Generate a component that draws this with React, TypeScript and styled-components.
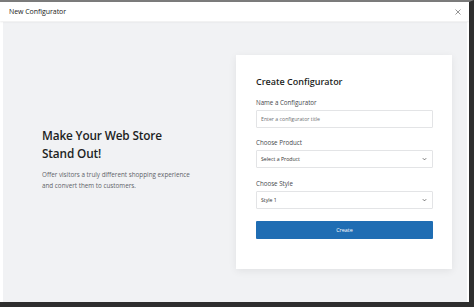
import React from "react";
import styled, { createGlobalStyle } from "styled-components";

const Global = createGlobalStyle`
  html, body { margin: 0; padding: 0; }
  body { width: 474px; height: 307px; overflow: hidden; font-family: "Open Sans", "Noto Sans", sans-serif; }
  * { box-sizing: border-box; }
`;

const Frame = styled.div`
  width: 474px;
  height: 307px;
  background: #ffffff;
  border-top: 2px solid #7b7b7b;
  border-right: 5px solid #2e2e2e;
  border-bottom: 5px solid #2e2e2e;
  display: flex;
  flex-direction: column;
`;

const Header = styled.div`
  height: 19px;
  flex: none;
  display: flex;
  align-items: center;
  justify-content: space-between;
  padding: 0 8px 0 9px;
  background: #fff;
  box-shadow: 0 1px 2px rgba(0, 0, 0, 0.08);
  position: relative;
  z-index: 1;
`;

const HeaderTitle = styled.div`
  font-size: 7px;
  font-weight: 500;
  color: #1a1a1a;
  letter-spacing: -0.05px;
`;

const Close = styled.button`
  border: none;
  background: none;
  padding: 0;
  width: 7px;
  height: 7px;
  display: flex;
  align-items: center;
  justify-content: center;
`;

const BodyWrap = styled.div`
  flex: 1;
  padding: 1px 2px 0 3px;
  display: flex;
`;

const Panel = styled.div`
  flex: 1;
  background: #f1f2f4;
  display: flex;
  align-items: center;
  padding: 0 15px 0 39px;
`;

const Intro = styled.div`
  flex: 1;
  padding-bottom: 7px;
`;

const Heading = styled.h1`
  margin: 0 0 7px;
  font-size: 11.8px;
  line-height: 18px;
  font-weight: 600;
  letter-spacing: -0.15px;
  color: #1d1f23;
  width: 140px;
`;

const Lead = styled.p`
  margin: 0;
  font-size: 6.3px;
  line-height: 11px;
  color: #5f6368;
  width: 160px;
`;

const Card = styled.div`
  width: 216px;
  height: 214px;
  background: #fff;
  box-shadow: 0 2px 8px rgba(0, 0, 0, 0.07);
  padding: 19px 19px 0 20px;
  display: flex;
  flex-direction: column;
`;

const CardTitle = styled.h2`
  margin: 0 0 9px;
  font-size: 9px;
  line-height: 15px;
  font-weight: 600;
  color: #1d1f23;
`;

const Field = styled.div<{ $gap: number }>`
  display: flex;
  flex-direction: column;
  margin-bottom: ${(p) => p.$gap}px;
`;

const Label = styled.label`
  font-size: 6.2px;
  line-height: 10px;
  color: #45484d;
  margin-bottom: 2px;
`;

const Box = styled.div`
  height: 18px;
  border: 1px solid #e3e4e6;
  border-radius: 1px;
  display: flex;
  align-items: center;
  justify-content: space-between;
  padding: 0 5px 0 4px;
  font-size: 5.2px;
  color: #555;
  background: #fff;
`;

const Placeholder = styled.span`
  color: #6b6e73;
`;

const Value = styled.span`
  color: #333;
`;

const Button = styled.button`
  height: 18px;
  border: none;
  border-radius: 1px;
  background: #1f6db3;
  color: #fff;
  font-family: inherit;
  font-size: 5.4px;
  padding: 0;
`;

const Chevron = () => (
  <svg width="5" height="4" viewBox="0 0 5 4">
    <path d="M0.8 1.2 L2.5 2.9 L4.2 1.2" fill="none" stroke="#555" strokeWidth="0.8" />
  </svg>
);

export default function App() {
  return (
    <>
      <Global />
      <Frame>
        <Header>
          <HeaderTitle>New Configurator</HeaderTitle>
          <Close aria-label="close">
            <svg width="6" height="6" viewBox="0 0 6 6">
              <path d="M0.5 0.5 L5.5 5.5 M5.5 0.5 L0.5 5.5" stroke="#8a8a8a" strokeWidth="0.9" />
            </svg>
          </Close>
        </Header>
        <BodyWrap>
          <Panel>
            <Intro>
              <Heading>Make Your Web Store Stand Out!</Heading>
              <Lead>Offer visitors a truly different shopping experience and convert them to customers.</Lead>
            </Intro>
            <Card>
              <CardTitle>Create Configurator</CardTitle>
              <Field $gap={10}>
                <Label>Name a Configurator</Label>
                <Box>
                  <Placeholder>Enter a configurator title</Placeholder>
                </Box>
              </Field>
              <Field $gap={11}>
                <Label>Choose Product</Label>
                <Box>
                  <Value>Select a Product</Value>
                  <Chevron />
                </Box>
              </Field>
              <Field $gap={12}>
                <Label>Choose Style</Label>
                <Box>
                  <Value>Style 1</Value>
                  <Chevron />
                </Box>
              </Field>
              <Button>Create</Button>
            </Card>
          </Panel>
        </BodyWrap>
      </Frame>
    </>
  );
}
